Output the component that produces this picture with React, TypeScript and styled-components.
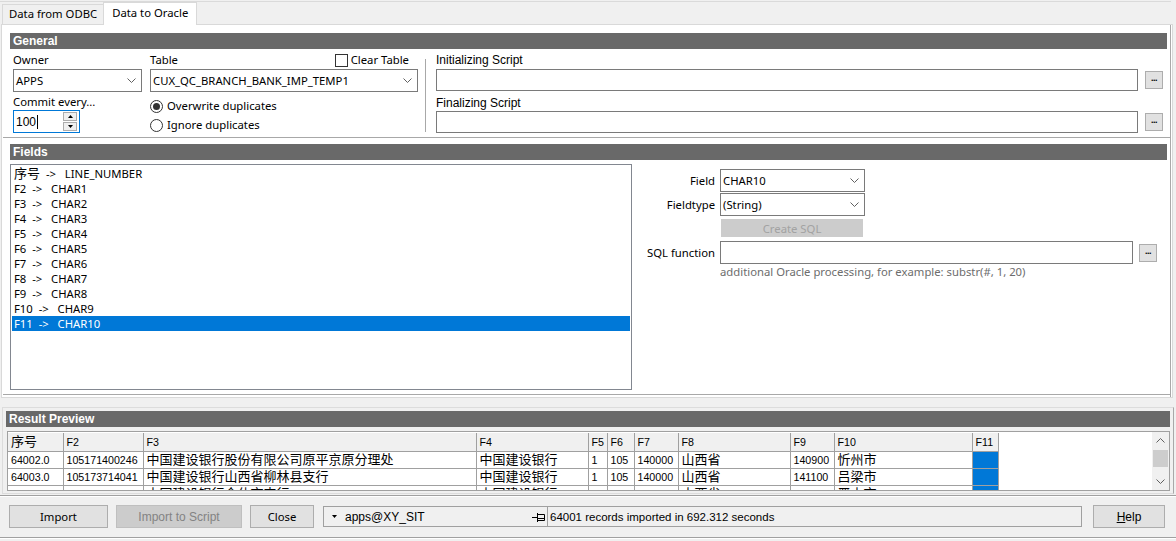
import React from "react";
import styled, { createGlobalStyle } from "styled-components";

const UI = `"Noto Sans", "Noto Sans CJK SC", sans-serif`;
const CLASSIC = `"Liberation Sans", Arial, "Noto Sans CJK SC", sans-serif`;

const GlobalStyle = createGlobalStyle`
  * { box-sizing: border-box; }
  html, body { margin: 0; padding: 0; background: #f0f0f0; }
  body { font-family: ${UI}; font-size: 11.3px; color: #000; }
`;

const Window = styled.div`
  width: 1176px;
  height: 541px;
  overflow: hidden;
  display: flex;
  flex-direction: column;
  background: #f0f0f0;
`;

const TopFrame = styled.div`
  height: 2px;
  margin-right: 5px;
  border-bottom: 1px solid #dadada;
`;

const TabBar = styled.div`
  height: 22px;
  display: flex;
  align-items: flex-end;
  padding-left: 2px;
`;

const Tab = styled.div<{ $active?: boolean }>`
  font-family: ${UI};
  font-size: 11.3px;
  border: 1px solid #d9d9d9;
  border-bottom: none;
  padding: 0 ${(p) => (p.$active ? 8 : 6)}px;
  height: ${(p) => (p.$active ? 23 : 20)}px;
  line-height: ${(p) => (p.$active ? 20 : 18)}px;
  background: ${(p) => (p.$active ? "#fff" : "#f0f0f0")};
  margin-bottom: ${(p) => (p.$active ? -1 : 0)}px;
  margin-left: ${(p) => (p.$active ? -1 : 0)}px;
  position: relative;
  z-index: ${(p) => (p.$active ? 1 : 0)};
`;

const TabPage = styled.div`
  width: 1172px;
  height: 374px;
  margin-left: 1px;
  background: #fff;
  border: 1px solid #d9d9d9;
  box-shadow: inset -1px 0 0 #fff, inset -2px 0 0 #a8a8a8;
  padding: 8px 5px 0 8px;
  display: flex;
  flex-direction: column;
  overflow: hidden;
`;

const SectionHeader = styled.div`
  height: 16px;
  line-height: 16px;
  background: #696969;
  color: #fff;
  font-family: ${CLASSIC};
  font-weight: bold;
  font-size: 12px;
  padding-left: 3px;
  flex: none;
`;

const Rule = styled.div<{ $top: number; $bottom: number }>`
  flex: none;
  margin: ${(p) => p.$top}px -3px ${(p) => p.$bottom}px -7px;
  border-top: 1px solid #a8a8a8;
`;

const GeneralBody = styled.div`
  display: flex;
  height: 88px;
  padding-left: 3px;
  flex: none;
`;

const Column = styled.div<{ $w?: number; $ml?: number }>`
  display: flex;
  flex-direction: column;
  ${(p) => (p.$w ? `width: ${p.$w}px;` : "flex: 1;")}
  margin-left: ${(p) => p.$ml ?? 0}px;
`;

const Label = styled.div<{ $mt?: number; $classic?: boolean }>`
  height: 16px;
  line-height: 16px;
  margin-top: ${(p) => p.$mt ?? 0}px;
  font-family: ${(p) => (p.$classic ? CLASSIC : UI)};
  font-size: ${(p) => (p.$classic ? "12px" : "11.3px")};
  white-space: nowrap;
`;

const LabelRow = styled.div`
  height: 16px;
  margin-top: 3px;
  display: flex;
  align-items: center;
  justify-content: space-between;
  line-height: 16px;
`;

const CheckLabel = styled.div`
  display: flex;
  align-items: center;
  gap: 3px;
  margin-right: 9px;
`;

const CheckBox = styled.span`
  width: 13px;
  height: 13px;
  border: 1px solid #333;
  background: #fff;
  display: inline-block;
`;

const Combo = styled.div<{ $w: number; $mt?: number }>`
  width: ${(p) => p.$w}px;
  height: 23px;
  margin-top: ${(p) => p.$mt ?? 0}px;
  border: 1px solid #7a7a7a;
  background: #fff;
  display: flex;
  align-items: center;
  justify-content: space-between;
  padding: 0 5px 0 2px;
  white-space: nowrap;
  flex: none;
`;

const Spin = styled.div`
  width: 67px;
  height: 23px;
  border: 1px solid #0078d7;
  background: #fff;
  display: flex;
  align-items: center;
  justify-content: space-between;
  padding: 0 2px 0 2px;
`;

const SpinValue = styled.span`
  display: flex;
  align-items: center;
  font-family: ${CLASSIC};
  font-size: 12px;
`;

const Caret = styled.span`
  width: 1px;
  height: 14px;
  background: #000;
  margin-left: 1px;
`;

const SpinButtons = styled.div`
  display: flex;
  flex-direction: column;
  gap: 1px;
`;

const SpinBtn = styled.div`
  width: 14px;
  height: 9px;
  background: #f0f0f0;
  border: 1px solid #adadad;
  display: flex;
  align-items: center;
  justify-content: center;
`;

const RadioRow = styled.div<{ $mt: number }>`
  height: 16px;
  margin-top: ${(p) => p.$mt}px;
  display: flex;
  align-items: center;
  gap: 4px;
  line-height: 16px;
`;

const RadioCircle = styled.span<{ $checked?: boolean }>`
  width: 13px;
  height: 13px;
  border-radius: 50%;
  border: 1px solid #333;
  background: #fff;
  display: inline-flex;
  align-items: center;
  justify-content: center;
  &::after {
    content: "";
    width: 7px;
    height: 7px;
    border-radius: 50%;
    background: ${(p) => (p.$checked ? "#333" : "transparent")};
  }
`;

const VSeparator = styled.div`
  width: 1px;
  height: 73px;
  margin: 10px 0 0 7px;
  background: #a8a8a8;
`;

const InputRow = styled.div<{ $gap?: number; $mt?: number; $mr?: number }>`
  display: flex;
  align-items: center;
  gap: ${(p) => p.$gap ?? 7}px;
  margin-top: ${(p) => p.$mt ?? 0}px;
  margin-right: ${(p) => p.$mr ?? 0}px;
`;

const TextInput = styled.div<{ $h: number; $w?: number }>`
  height: ${(p) => p.$h}px;
  ${(p) => (p.$w ? `width: ${p.$w}px;` : "flex: 1;")}
  border: 1px solid #7a7a7a;
  background: #fff;
`;

const DotsButton = styled.div`
  width: 18px;
  height: 18px;
  background: #e1e1e1;
  border: 1px solid #adadad;
  display: flex;
  align-items: center;
  justify-content: center;
  font-family: ${CLASSIC};
  font-weight: bold;
  font-size: 9px;
  line-height: 1;
  padding-bottom: 3px;
  letter-spacing: -0.5px;
  flex: none;
`;

const FieldsBody = styled.div`
  display: flex;
  height: 226px;
  margin-top: 4px;
  flex: none;
`;

const ListBox = styled.div`
  width: 622px;
  height: 226px;
  border: 1px solid #828790;
  padding: 1px;
  overflow: hidden;
`;

const ListItem = styled.div<{ $selected?: boolean }>`
  height: 15px;
  line-height: 15px;
  padding-left: 2px;
  white-space: pre;
  background: ${(p) => (p.$selected ? "#0078d7" : "transparent")};
  color: ${(p) => (p.$selected ? "#fff" : "#000")};
`;

const Form = styled.div`
  display: flex;
  flex-direction: column;
`;

const FormRow = styled.div<{ $mt: number }>`
  display: flex;
  align-items: center;
  margin-top: ${(p) => p.$mt}px;
`;

const FormLabel = styled.div`
  width: 83px;
  margin-right: 5px;
  text-align: right;
  white-space: nowrap;
`;

const FlatButton = styled.div<{ $w: number }>`
  width: ${(p) => p.$w}px;
  height: 18px;
  margin-left: 1px;
  background: #cccccc;
  color: #a2a2a2;
  display: flex;
  align-items: center;
  justify-content: center;
`;

const Hint = styled.div`
  margin-left: 88px;
  height: 16px;
  line-height: 16px;
  color: #6d6d6d;
  white-space: nowrap;
`;

const ResultPanel = styled.div`
  margin: 9px 2px 0 2px;
  height: 87px;
  border: 1px solid #dcdcdc;
  border-right-color: #a8a8a8;
  background: #f0f0f0;
  padding: 3px 3px 0 3px;
  flex: none;
`;

const GridBox = styled.div`
  margin: 4px 0 0 1px;
  height: 60px;
  border: 1px solid #a0a0a0;
  background: #fff;
  display: flex;
  overflow: hidden;
`;

const GridScroll = styled.div`
  flex: 1;
  overflow: hidden;
  padding-top: 1px;
`;

const GridTable = styled.table`
  border-collapse: collapse;
  table-layout: fixed;
  width: 990px;
  font-family: ${CLASSIC};
  font-size: 10.67px;
`;

const Th = styled.th`
  height: 18px;
  padding: 0 3px;
  background: #f0f0f0;
  border-right: 1px solid #a0a0a0;
  border-bottom: 1px solid #a0a0a0;
  font-weight: normal;
  text-align: left;
  white-space: nowrap;
  line-height: 14px;
`;

const Td = styled.td<{ $blue?: boolean }>`
  height: 17px;
  padding: 0 3px;
  border-right: 1px solid #a0a0a0;
  border-bottom: 1px solid #a0a0a0;
  background: ${(p) => (p.$blue ? "#0078d7" : "#fff")};
  white-space: nowrap;
  line-height: 14px;
`;

const Cjk = styled.span`
  font-family: "Noto Sans CJK SC", sans-serif;
  font-size: 13px;
  line-height: 1;
`;

const ScrollBar = styled.div`
  width: 17px;
  background: #f0f0f0;
  display: flex;
  flex-direction: column;
  flex: none;
`;

const ScrollArrow = styled.div`
  height: 17px;
  display: flex;
  align-items: center;
  justify-content: center;
`;

const ScrollThumb = styled.div`
  height: 17px;
  margin: 1px 1px 0;
  background: #cdcdcd;
`;

const ScrollTrack = styled.div`
  flex: 1;
`;

const BottomBar = styled.div`
  margin-top: 1px;
  height: 43px;
  border-top: 1px solid #a0a0a0;
  border-bottom: 1px solid #a0a0a0;
  box-shadow: inset 0 1px 0 #fff, 0 1px 0 #fff;
  display: flex;
  align-items: flex-start;
  padding: 9px 0 0 9px;
  flex: none;
`;

const Button = styled.div<{ $w: number; $ml?: number; $disabled?: boolean; $classic?: boolean }>`
  width: ${(p) => p.$w}px;
  height: 23px;
  margin-left: ${(p) => p.$ml ?? 0}px;
  border: 1px solid ${(p) => (p.$disabled ? "#bfbfbf" : "#adadad")};
  background: ${(p) => (p.$disabled ? "#cccccc" : "#e1e1e1")};
  color: ${(p) => (p.$disabled ? "#838383" : "#000")};
  font-family: ${(p) => (p.$classic ? CLASSIC : UI)};
  font-size: ${(p) => (p.$classic ? "12px" : "11.3px")};
  display: flex;
  align-items: center;
  justify-content: center;
  white-space: nowrap;
  flex: none;
`;

const Underline = styled.span`
  text-decoration: underline;
`;

const ConnCombo = styled.div`
  width: 225px;
  height: 21px;
  margin: 1px 0 0 9px;
  border: 1px solid #a0a0a0;
  display: flex;
  align-items: center;
  padding: 0 2px 0 8px;
  font-family: ${CLASSIC};
  font-size: 12px;
  gap: 8px;
  flex: none;
`;

const ConnText = styled.span`
  flex: 1;
`;

const StatusPanel = styled.div`
  width: 534px;
  height: 21px;
  margin-top: 1px;
  border: 1px solid #a0a0a0;
  border-left: none;
  padding-left: 2px;
  display: flex;
  align-items: center;
  font-family: ${CLASSIC};
  font-size: 11.5px;
  white-space: nowrap;
  flex: none;
`;

const cjkRe = /([\u3000-\u9fff\uff00-\uffef]+)/;
const Mixed = ({ text }: { text: string }) => (
  <>
    {text.split(cjkRe).map((part, i) =>
      cjkRe.test(part) ? <Cjk key={i}>{part}</Cjk> : <React.Fragment key={i}>{part}</React.Fragment>
    )}
  </>
);

const Chevron = ({ dir = "down" }: { dir?: "down" | "up" }) => (
  <svg width="9" height="5" viewBox="0 0 9 5">
    <path
      d={dir === "down" ? "M0.5 0.5 L4.5 4.5 L8.5 0.5" : "M0.5 4.5 L4.5 0.5 L8.5 4.5"}
      fill="none"
      stroke="#606060"
      strokeWidth="1"
    />
  </svg>
);

const Tri = ({ up }: { up?: boolean }) => (
  <svg width="5" height="3" viewBox="0 0 5 3">
    <path d={up ? "M0 3 L2.5 0 L5 3 Z" : "M0 0 L2.5 3 L5 0 Z"} fill="#000" />
  </svg>
);

const Pin = () => (
  <svg width="13" height="10" viewBox="0 0 13 10">
    <path d="M0 5.5H5M5.5 1V10M6 2.5H12.5V8.5H6M6 6.5H12.5" stroke="#000" fill="none" strokeWidth="1" />
  </svg>
);

const fieldItems = [
  "序号  ->   LINE_NUMBER",
  "F2  ->   CHAR1",
  "F3  ->   CHAR2",
  "F4  ->   CHAR3",
  "F5  ->   CHAR4",
  "F6  ->   CHAR5",
  "F7  ->   CHAR6",
  "F8  ->   CHAR7",
  "F9  ->   CHAR8",
  "F10  ->   CHAR9",
  "F11  ->   CHAR10",
];

const COLS = [55, 80, 333, 112, 19, 27, 44, 112, 44, 138, 26];
const HEADERS = ["序号", "F2", "F3", "F4", "F5", "F6", "F7", "F8", "F9", "F10", "F11"];
const ROWS = [
  ["64002.0", "105171400246", "中国建设银行股份有限公司原平京原分理处", "中国建设银行", "1", "105", "140000", "山西省", "140900", "忻州市", ""],
  ["64003.0", "105173714041", "中国建设银行山西省柳林县支行", "中国建设银行", "1", "105", "140000", "山西省", "141100", "吕梁市", ""],
  ["64004.0", "105175416101", "中国建设银行介休市支行", "中国建设银行", "1", "105", "140000", "山西省", "140700", "晋中市", ""],
];

export default function App() {
  return (
    <>
      <GlobalStyle />
      <Window>
        <TopFrame />
        <TabBar>
          <Tab>Data from ODBC</Tab>
          <Tab $active>Data to Oracle</Tab>
        </TabBar>
        <TabPage>
          <SectionHeader>General</SectionHeader>
          <GeneralBody>
            <Column $w={129}>
              <Label $mt={3}>Owner</Label>
              <Combo $w={129} $mt={1}>
                <span>APPS</span>
                <Chevron />
              </Combo>
              <Label $mt={2}>Commit every...</Label>
              <Spin>
                <SpinValue>
                  100
                  <Caret />
                </SpinValue>
                <SpinButtons>
                  <SpinBtn>
                    <Tri up />
                  </SpinBtn>
                  <SpinBtn>
                    <Tri />
                  </SpinBtn>
                </SpinButtons>
              </Spin>
            </Column>
            <Column $w={268} $ml={8}>
              <LabelRow>
                <span>Table</span>
                <CheckLabel>
                  <CheckBox />
                  <span>Clear Table</span>
                </CheckLabel>
              </LabelRow>
              <Combo $w={268} $mt={1}>
                <span>CUX_QC_BRANCH_BANK_IMP_TEMP1</span>
                <Chevron />
              </Combo>
              <RadioRow $mt={6}>
                <RadioCircle $checked />
                <span>Overwrite duplicates</span>
              </RadioRow>
              <RadioRow $mt={3}>
                <RadioCircle />
                <span>Ignore duplicates</span>
              </RadioRow>
            </Column>
            <VSeparator />
            <Column $ml={10}>
              <Label $mt={3} $classic>
                Initializing Script
              </Label>
              <InputRow $mt={1} $mr={4}>
                <TextInput $h={22} />
                <DotsButton>...</DotsButton>
              </InputRow>
              <Label $mt={4} $classic>
                Finalizing Script
              </Label>
              <InputRow $mr={4}>
                <TextInput $h={22} />
                <DotsButton>...</DotsButton>
              </InputRow>
            </Column>
          </GeneralBody>
          <Rule $top={0} $bottom={6} />
          <SectionHeader>Fields</SectionHeader>
          <FieldsBody>
            <ListBox>
              {fieldItems.map((t, i) => (
                <ListItem key={t} $selected={i === fieldItems.length - 1}>
                  <Mixed text={t} />
                </ListItem>
              ))}
            </ListBox>
            <Form>
              <FormRow $mt={5}>
                <FormLabel>Field</FormLabel>
                <Combo $w={145}>
                  <span>CHAR10</span>
                  <Chevron />
                </Combo>
              </FormRow>
              <FormRow $mt={1}>
                <FormLabel>Fieldtype</FormLabel>
                <Combo $w={145}>
                  <span>(String)</span>
                  <Chevron />
                </Combo>
              </FormRow>
              <FormRow $mt={3}>
                <FormLabel />
                <FlatButton $w={142}>Create SQL</FlatButton>
              </FormRow>
              <FormRow $mt={4}>
                <FormLabel>SQL function</FormLabel>
                <InputRow $gap={6}>
                  <TextInput $h={23} $w={413} />
                  <DotsButton>...</DotsButton>
                </InputRow>
              </FormRow>
              <Hint>additional Oracle processing, for example: substr(#, 1, 20)</Hint>
            </Form>
          </FieldsBody>
          <Rule $top={4} $bottom={0} />
        </TabPage>
        <ResultPanel>
          <SectionHeader>Result Preview</SectionHeader>
          <GridBox>
            <GridScroll>
              <GridTable>
                <colgroup>
                  {COLS.map((w, i) => (
                    <col key={i} style={{ width: w }} />
                  ))}
                </colgroup>
                <thead>
                  <tr>
                    {HEADERS.map((h) => (
                      <Th key={h}>
                        <Mixed text={h} />
                      </Th>
                    ))}
                  </tr>
                </thead>
                <tbody>
                  {ROWS.map((r, ri) => (
                    <tr key={ri}>
                      {r.map((c, ci) => (
                        <Td key={ci} $blue={ci === 10}>
                          <Mixed text={c} />
                        </Td>
                      ))}
                    </tr>
                  ))}
                </tbody>
              </GridTable>
            </GridScroll>
            <ScrollBar>
              <ScrollArrow>
                <Chevron dir="up" />
              </ScrollArrow>
              <ScrollThumb />
              <ScrollTrack />
              <ScrollArrow>
                <Chevron />
              </ScrollArrow>
            </ScrollBar>
          </GridBox>
        </ResultPanel>
        <BottomBar>
          <Button $w={99}>Import</Button>
          <Button $w={126} $ml={8} $disabled $classic>
            Import to Script
          </Button>
          <Button $w={64} $ml={8}>
            Close
          </Button>
          <ConnCombo>
            <Tri />
            <ConnText>apps@XY_SIT</ConnText>
            <Pin />
          </ConnCombo>
          <StatusPanel>64001 records imported in 692.312 seconds</StatusPanel>
          <Button $w={72} $ml={11} $classic>
            <Underline>H</Underline>elp
          </Button>
        </BottomBar>
      </Window>
    </>
  );
}
